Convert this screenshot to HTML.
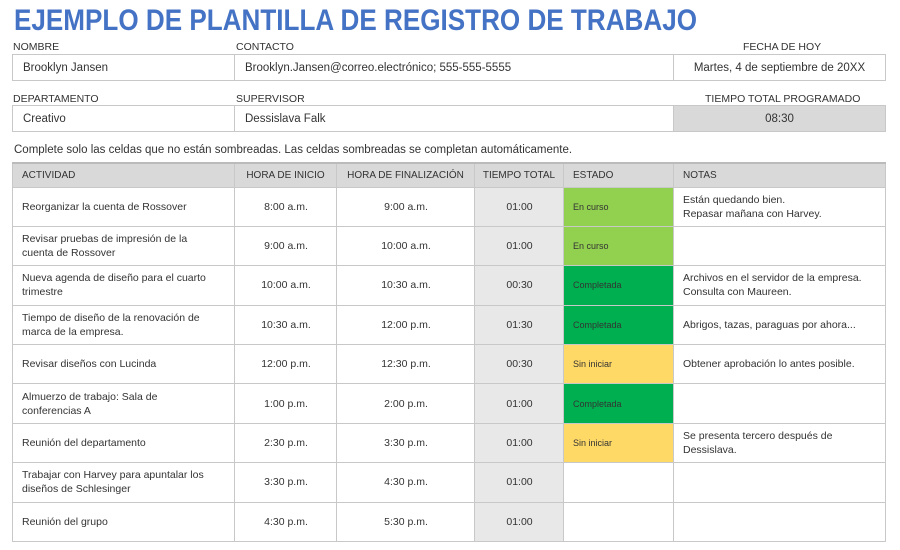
<!DOCTYPE html>
<html><head><meta charset="utf-8"><style>
*{margin:0;padding:0;box-sizing:border-box}
body{width:900px;height:550px;background:#fff;font-family:"Liberation Sans",sans-serif;color:#333;position:relative;overflow:hidden}
.a{position:absolute}
.lbl{font-size:10.5px;color:#333}
.box{position:absolute;border:1px solid #c8c8c8;font-size:11.5px;display:flex;align-items:center}
table{position:absolute;left:12px;top:162px;border-collapse:collapse;font-size:10.5px;table-layout:fixed}
td,th{border:1px solid #c8c8c8;height:39.4px;padding:0 8px 0 9px;line-height:14px;vertical-align:middle}
th{height:24px;background:#d9d9d9;font-weight:normal;text-align:left;border-top:2px solid #bbb;white-space:nowrap;font-size:10px;padding:1px 6px 0 9px}
td:first-child{padding-right:14px}
.c{text-align:center}
th.c{text-align:center;padding:1px 4px 0}
.t{background:#e8e8e8;text-align:center}
.g1{background:#92d050;font-size:9px}
.g2{background:#00b050;font-size:9px}
.y{background:#ffd966;font-size:9px}
</style></head><body>
<svg class="a" style="left:0;top:0" width="900" height="40"><text x="14" y="30" font-family="Liberation Sans" font-weight="bold" font-size="30" fill="#4472c4" textLength="683" lengthAdjust="spacingAndGlyphs">EJEMPLO DE PLANTILLA DE REGISTRO DE TRABAJO</text></svg>
<div class="a lbl" style="left:13px;top:41px">NOMBRE</div>
<div class="a lbl" style="left:236px;top:41px">CONTACTO</div>
<div class="a lbl" style="left:743px;top:41px">FECHA DE HOY</div>
<div class="box" style="left:12px;top:54px;width:223px;height:27px;padding-left:10px">Brooklyn Jansen</div>
<div class="box" style="left:234px;top:54px;width:440px;height:27px;padding-left:10px">Brooklyn.Jansen@correo.electrónico; 555-555-5555</div>
<div class="box" style="left:673px;top:54px;width:213px;height:27px;justify-content:center">Martes, 4 de septiembre de 20XX</div>
<div class="a lbl" style="left:13px;top:93px">DEPARTAMENTO</div>
<div class="a lbl" style="left:236px;top:93px">SUPERVISOR</div>
<div class="a lbl" style="left:705px;top:93px">TIEMPO TOTAL PROGRAMADO</div>
<div class="box" style="left:12px;top:105px;width:223px;height:27px;padding-left:10px">Creativo</div>
<div class="box" style="left:234px;top:105px;width:440px;height:27px;padding-left:10px">Dessislava Falk</div>
<div class="box" style="left:673px;top:105px;width:213px;height:27px;justify-content:center;background:#d9d9d9">08:30</div>
<div class="a" style="left:14px;top:144px;font-size:11.5px">Complete solo las celdas que no están sombreadas. Las celdas sombreadas se completan automáticamente.</div>
<table>
<colgroup><col style="width:222px"><col style="width:102px"><col style="width:138px"><col style="width:89px"><col style="width:110px"><col style="width:212px"></colgroup>
<tr><th>ACTIVIDAD</th><th class="c">HORA DE INICIO</th><th class="c">HORA DE FINALIZACIÓN</th><th class="c">TIEMPO TOTAL</th><th>ESTADO</th><th>NOTAS</th></tr>
<tr><td>Reorganizar la cuenta de Rossover</td><td class="c">8:00 a.m.</td><td class="c">9:00 a.m.</td><td class="t">01:00</td><td class="g1">En curso</td><td>Están quedando bien.<br>Repasar mañana con Harvey.</td></tr>
<tr><td>Revisar pruebas de impresión de la<br>cuenta de Rossover</td><td class="c">9:00 a.m.</td><td class="c">10:00 a.m.</td><td class="t">01:00</td><td class="g1">En curso</td><td></td></tr>
<tr><td>Nueva agenda de diseño para el cuarto trimestre</td><td class="c">10:00 a.m.</td><td class="c">10:30 a.m.</td><td class="t">00:30</td><td class="g2">Completada</td><td>Archivos en el servidor de la empresa. Consulta con Maureen.</td></tr>
<tr><td>Tiempo de diseño de la renovación de marca de la empresa.</td><td class="c">10:30 a.m.</td><td class="c">12:00 p.m.</td><td class="t">01:30</td><td class="g2">Completada</td><td>Abrigos, tazas, paraguas por ahora...</td></tr>
<tr><td>Revisar diseños con Lucinda</td><td class="c">12:00 p.m.</td><td class="c">12:30 p.m.</td><td class="t">00:30</td><td class="y">Sin iniciar</td><td>Obtener aprobación lo antes posible.</td></tr>
<tr><td>Almuerzo de trabajo: Sala de<br>conferencias A</td><td class="c">1:00 p.m.</td><td class="c">2:00 p.m.</td><td class="t">01:00</td><td class="g2">Completada</td><td></td></tr>
<tr><td>Reunión del departamento</td><td class="c">2:30 p.m.</td><td class="c">3:30 p.m.</td><td class="t">01:00</td><td class="y">Sin iniciar</td><td>Se presenta tercero después de Dessislava.</td></tr>
<tr><td>Trabajar con Harvey para apuntalar los diseños de Schlesinger</td><td class="c">3:30 p.m.</td><td class="c">4:30 p.m.</td><td class="t">01:00</td><td></td><td></td></tr>
<tr><td>Reunión del grupo</td><td class="c">4:30 p.m.</td><td class="c">5:30 p.m.</td><td class="t">01:00</td><td></td><td></td></tr>
</table>
</body></html>
